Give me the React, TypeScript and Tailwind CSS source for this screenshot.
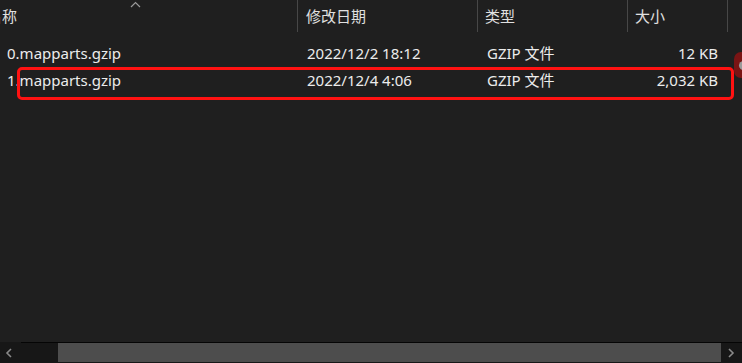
import React from "react";

const font = { fontFamily: '"Segoe UI", "Noto Sans", "Noto Sans CJK SC", sans-serif' };

function Row({ name, date, type, size }: { name: string; date: string; type: string; size: string }) {
  return (
    <div className="flex h-[27px] items-center text-[15px] text-[#ececec]">
      <div className="w-[298px] shrink-0 pl-[7px] whitespace-nowrap">{name}</div>
      <div className="w-[180px] shrink-0 pl-[9px] whitespace-nowrap">{date}</div>
      <div className="w-[150px] shrink-0 pl-[9px] whitespace-nowrap">{type}</div>
      <div className="w-[100px] shrink-0 pr-[10px] text-right whitespace-nowrap">{size}</div>
    </div>
  );
}

export default function App() {
  return (
    <div className="relative w-[742px] h-[363px] overflow-hidden bg-[#1f1f1f] flex flex-col" style={font}>
      {/* header */}
      <div className="relative flex h-[32px] shrink-0 text-[15px] text-[#e0e0e0]">
        <div className="w-[298px] shrink-0 border-r border-[#474747] flex items-center overflow-hidden">
          <span className="ml-[-13px] whitespace-nowrap">名称</span>
        </div>
        <div className="w-[180px] shrink-0 border-r border-[#474747] flex items-center pl-[8px]">修改日期</div>
        <div className="w-[150px] shrink-0 border-r border-[#474747] flex items-center pl-[7px]">类型</div>
        <div className="w-[100px] shrink-0 border-r border-[#474747] flex items-center pl-[7px]">大小</div>
        <svg className="absolute left-[130px] top-[1px]" width="11" height="7" viewBox="0 0 11 7">
          <path d="M1 6 L5.5 1.5 L10 6" stroke="#9a9a9a" strokeWidth="1.2" fill="none" />
        </svg>
      </div>
      {/* rows */}
      <div className="flex-1 pt-[8px]">
        <Row name="0.mapparts.gzip" date="2022/12/2 18:12" type="GZIP 文件" size="12 KB" />
        <Row name="1.mapparts.gzip" date="2022/12/4 4:06" type="GZIP 文件" size="2,032 KB" />
      </div>
      {/* red highlight */}
      <div className="absolute left-[17px] top-[67px] w-[717px] h-[33px] border-[3px] border-[#ff1212] rounded-[5px]" />
      {/* dark red overlay at right edge */}
      <div className="absolute left-[734px] top-[52px] w-[20px] h-[26px] rounded-l-[7px] bg-[#7a1414] overflow-hidden">
        <div className="absolute left-[5px] top-[9px] w-[9px] h-[9px] rounded-full bg-[#9a9a9a]" />
      </div>
      {/* horizontal scrollbar */}
      <div className="relative h-[21px] shrink-0 bg-[#171717] flex items-center">
        <div className="absolute left-[21px] right-0 top-0 h-[1px] bg-[#050505]" />
        <svg className="absolute left-[5px] top-[6px]" width="8" height="10" viewBox="0 0 8 10">
          <path d="M6 1 L2 5 L6 9" stroke="#8a8a8a" strokeWidth="1.6" fill="none" />
        </svg>
        <div className="absolute left-[58px] top-[1px] w-[663px] h-[19px] bg-[#4d4d4d]" />
        <svg className="absolute left-[727px] top-[6px]" width="8" height="10" viewBox="0 0 8 10">
          <path d="M2 1 L6 5 L2 9" stroke="#8a8a8a" strokeWidth="1.6" fill="none" />
        </svg>
      </div>
    </div>
  );
}
